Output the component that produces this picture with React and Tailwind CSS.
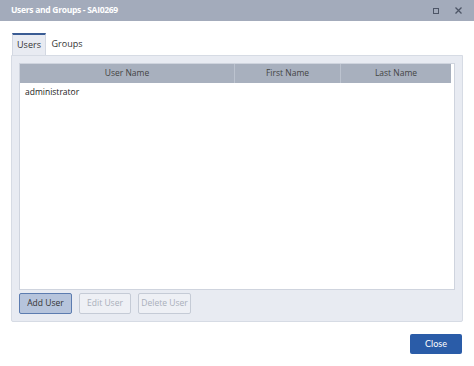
export default function App() {
  return (
    <div
      className="w-[474px] h-[366px] bg-white flex flex-col text-[8.5px] text-[#333]"
      style={{ fontFamily: '"Open Sans", "Noto Sans", sans-serif' }}
    >
      {/* title bar */}
      <div className="h-[21px] bg-[#a3abbb] flex items-center pl-[11px] pr-[12px]">
        <span className="font-bold text-white text-[8.5px] tracking-[-0.3px]">Users and Groups - SAI0269</span>
        <div className="ml-auto flex items-center gap-[16px]">
          <div className="w-[6px] h-[6px] border-[1.5px] border-[#4d5566]" />
          <svg width="7" height="7" viewBox="0 0 7 7">
            <path d="M0.5 0.5 L6.5 6.5 M6.5 0.5 L0.5 6.5" stroke="#4d5566" strokeWidth="1.3" />
          </svg>
        </div>
      </div>

      {/* tabs */}
      <div className="pl-[12px] pt-[12px] flex items-end">
        <div className="w-[34px] h-[22px] bg-[#e8ebf2] border-t-2 border-[#3a5c94] border-l border-r border-l-[#d3d8e2] border-r-[#d3d8e2] flex items-center justify-center text-[9px]">
          Users
        </div>
        <div className="w-[42px] h-[22px] flex items-center justify-center text-[9px]">Groups</div>
      </div>

      {/* panel */}
      <div className="mx-[11px] w-[452px] h-[267px] bg-[#e8ebf2] border border-[#d6dbe4] rounded-b-[2px] flex flex-col px-[7px] pt-[7px] pb-[7px]">
        <div className="flex-1 bg-white border border-[#cfd4de] flex flex-col pr-[3px]">
          <div className="h-[19px] bg-[#a8b0be] flex text-[#444]">
            <div className="w-[215px] border-r border-[#bcc3cf] flex items-center justify-center">User Name</div>
            <div className="w-[106px] border-r border-[#bcc3cf] flex items-center justify-center">First Name</div>
            <div className="flex-1 flex items-center justify-center">Last Name</div>
          </div>
          <div className="pl-[5px] pt-[3px] text-[#222]">administrator</div>
        </div>
        <div className="flex gap-[7px] mt-[3px]">
          <button className="w-[53px] h-[21px] bg-[#b6c4dc] border border-[#5c7cb0] rounded-[2px] text-[#333]">
            Add User
          </button>
          <button className="w-[52px] h-[21px] bg-[#eef0f5] border border-[#c5cbd6] rounded-[2px] text-[#a9afba]">
            Edit User
          </button>
          <button className="w-[53px] h-[21px] bg-[#eef0f5] border border-[#c5cbd6] rounded-[2px] text-[#a9afba]">
            Delete User
          </button>
        </div>
      </div>

      {/* footer */}
      <div className="flex justify-end pr-[12px] pt-[12px]">
        <button
          className="w-[52px] h-[20px] bg-[#2a5ca8] text-white rounded-[2px] text-[9px]"
          style={{ fontFamily: 'Lato, sans-serif' }}
        >
          Close
        </button>
      </div>
    </div>
  );
}
